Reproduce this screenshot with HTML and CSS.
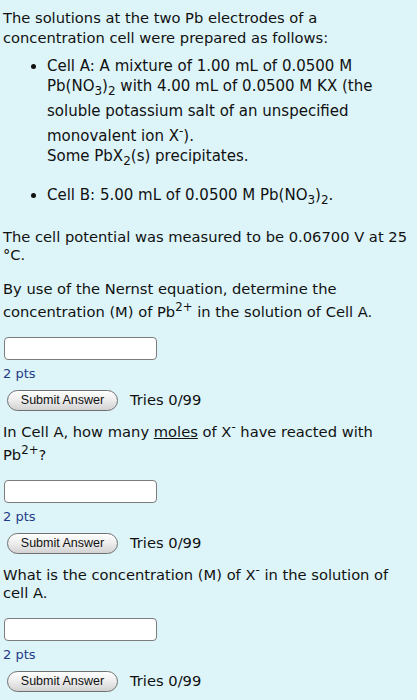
FILE: index.html
```html
<!DOCTYPE html>
<html>
<head>
<meta charset="utf-8">
<link rel="stylesheet" href="styles.css">
</head>
<body>
<div class="page">
  <p class="para first">The solutions at the two Pb electrodes of a concentration cell were prepared as follows:</p>
  <ul class="cells">
    <li>Cell A: A mixture of 1.00 mL of 0.0500 M Pb(NO<sub>3</sub>)<sub>2</sub> with 4.00 mL of 0.0500 M KX (the soluble potassium salt of an unspecified monovalent ion X<sup>-</sup>).<br>Some PbX<sub>2</sub>(s) precipitates.</li>
    <li>Cell B: 5.00 mL of 0.0500 M Pb(NO<sub>3</sub>)<sub>2</sub>.</li>
  </ul>
  <p class="para">The cell potential was measured to be 0.06700 V at 25 °C.</p>
  <p class="para">By use of the Nernst equation, determine the concentration (M) of Pb<sup>2+</sup> in the solution of Cell A.</p>

  <div class="answer">
    <input class="field" type="text">
    <div class="pts">2 pts</div>
    <div class="submit-row"><button class="submit">Submit Answer</button><span class="tries">Tries 0/99</span></div>
  </div>

  <p class="para">In Cell A, how many <u>moles</u> of X<sup class="minus">-</sup> have reacted with Pb<sup>2+</sup>?</p>
  <div class="answer">
    <input class="field" type="text">
    <div class="pts">2 pts</div>
    <div class="submit-row"><button class="submit">Submit Answer</button><span class="tries">Tries 0/99</span></div>
  </div>

  <p class="para">What is the concentration (M) of X<sup class="minus">-</sup> in the solution of cell A.</p>
  <div class="answer">
    <input class="field" type="text">
    <div class="pts">2 pts</div>
    <div class="submit-row"><button class="submit">Submit Answer</button><span class="tries">Tries 0/99</span></div>
  </div>
</div>
</body>
</html>
```
FILE: styles.css
```css
html, body {
  margin: 0;
  padding: 0;
  background: #ddf5f9;
}
.page {
  width: 410px;
  padding: 8px 0 0 3px;
  font-family: "DejaVu Sans", Verdana, sans-serif;
  font-size: 14.7px;
  line-height: 18px;
  color: #111;
}
.para {
  margin: 0 0 16px 0;
}
.first {
  line-height: 20px;
  margin-bottom: 8px;
}
sub, sup {
  font-size: 80%;
}
sup.minus {
  line-height: 0;
}
.cells {
  margin: 0 0 18px 0;
  padding-left: 44px;
  font-size: 15px;
  line-height: 20px;
}
.cells li {
  margin-bottom: 14px;
}
.cells li:last-child {
  margin-bottom: 0;
}
.answer {
  margin: 14px 0 12px 0;
}
.field {
  display: block;
  box-sizing: border-box;
  width: 153px;
  height: 23px;
  margin: 0 0 0 1px;
  border: 1px solid #7c7c7c;
  border-radius: 4px;
  background: #fff;
}
.pts {
  font-size: 13px;
  line-height: 16px;
  color: #1f3c88;
  margin-top: 6px;
}
.submit-row {
  display: flex;
  align-items: center;
  margin-top: 8px;
}
.submit {
  box-sizing: border-box;
  width: 111px;
  height: 21px;
  margin-left: 4px;
  padding: 0;
  border: 1px solid #707070;
  border-radius: 11px;
  background: linear-gradient(#ffffff, #ececec 50%, #d2d2d2);
  font-family: "Liberation Sans", Arial, sans-serif;
  font-size: 12.5px;
  color: #111;
}
.tries {
  margin-left: 12px;
}
```
